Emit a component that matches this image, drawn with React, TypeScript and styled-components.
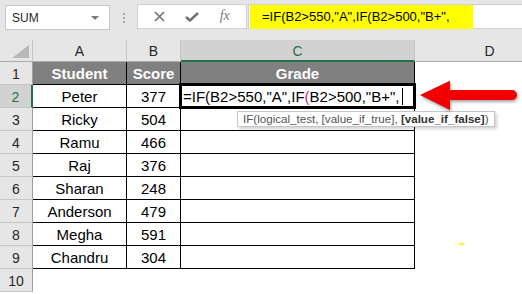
import React from 'react';
import styled, { createGlobalStyle } from 'styled-components';

const Global = createGlobalStyle`
  html, body { margin: 0; padding: 0; background: #fff; }
  body { font-family: "Liberation Sans", Arial, sans-serif; }
`;

const Window = styled.div`
  width: 522px;
  height: 294px;
  overflow: hidden;
  background: #fff;
  display: flex;
  flex-direction: column;
`;

const Toolbar = styled.div`
  height: 40px;
  flex: none;
  background: #e6e6e6;
  display: flex;
  align-items: flex-start;
  padding: 4px 0 0 5px;
  box-sizing: border-box;
`;

const NameBox = styled.div`
  margin-top: 1px;
  width: 105px;
  height: 25px;
  box-sizing: border-box;
  background: #fff;
  border: 1px solid #c6c6c6;
  display: flex;
  align-items: center;
  padding-left: 6px;
  font-size: 12px;
  color: #262626;
`;

const Caret = styled.span`
  margin-left: auto;
  margin-right: 10px;
  width: 0;
  height: 0;
  border-left: 4px solid transparent;
  border-right: 4px solid transparent;
  border-top: 4px solid #7a7a7a;
`;

const Grip = styled.div`
  width: 27px;
  height: 25px;
  display: flex;
  flex-direction: column;
  align-items: center;
  justify-content: center;
  gap: 2px;
  padding-top: 3px;
  box-sizing: border-box;
`;

const GripDot = styled.span`
  width: 2px;
  height: 2px;
  background: #a6a6a6;
`;

const FxButtons = styled.div`
  width: 110px;
  height: 25px;
  box-sizing: border-box;
  background: #fff;
  border: 1px solid #d0d0d0;
  display: flex;
  align-items: center;
  justify-content: space-around;
  padding: 0 6px 0 6px;
`;

const FxLabel = styled.span`
  font-family: "Liberation Serif", "Times New Roman", serif;
  font-style: italic;
  font-size: 14px;
  color: #7a7a7a;
  margin-top: -2px;
`;

const FormulaInput = styled.div`
  margin-left: 1px;
  flex: 1;
  height: 25px;
  box-sizing: border-box;
  background: #fff;
  border: 1px solid #d0d0d0;
  border-right: none;
  padding: 0 0 0 1px;
  display: flex;
`;

const Highlight = styled.div`
  width: 223px;
  height: 24px;
  background: #ffff00;
  font-size: 13px;
  line-height: 24px;
  padding-left: 12px;
  box-sizing: border-box;
  color: #000;
  white-space: nowrap;
`;

const Sheet = styled.div`
  position: relative;
  display: grid;
  grid-template-columns: 33px 94px 54px 234px 150px;
  grid-template-rows: 22px;
  grid-auto-rows: 23px;
`;

const CornerCell = styled.div`
  background: #e6e6e6;
  border-right: 1px solid #c6c6c6;
  border-bottom: 1px solid #ababab;
  display: flex;
  align-items: flex-end;
  justify-content: flex-end;
  padding: 0 3px 3px 0;
`;

const CornerTriangle = styled.span`
  width: 0;
  height: 0;
  border-left: 17px solid transparent;
  border-bottom: 13px solid #b8b8b8;
`;

const ColHeader = styled.div<{ $selected?: boolean }>`
  background: ${(p) => (p.$selected ? '#d2d2d2' : '#e6e6e6')};
  border-right: 1px solid #c6c6c6;
  border-bottom: ${(p) => (p.$selected ? '2px solid #217346' : '1px solid #ababab')};
  color: ${(p) => (p.$selected ? '#217346' : '#262626')};
  font-size: 14px;
  display: flex;
  align-items: center;
  justify-content: center;
  padding-top: 1px;
  box-sizing: border-box;
`;

const RowHeader = styled.div<{ $selected?: boolean }>`
  background: ${(p) => (p.$selected ? '#d2d2d2' : '#e6e6e6')};
  border-right: ${(p) => (p.$selected ? '2px solid #217346' : '1px solid #9e9e9e')};
  border-bottom: 1px solid #c6c6c6;
  color: ${(p) => (p.$selected ? '#217346' : '#262626')};
  font-size: 14px;
  display: flex;
  align-items: center;
  justify-content: center;
  padding-top: 1px;
  box-sizing: border-box;
`;

type Variant = 'title' | 'data' | 'blank';

const Cell = styled.div<{ $variant: Variant }>`
  box-sizing: border-box;
  display: flex;
  align-items: center;
  justify-content: center;
  font-size: 15px;
  padding-top: 1px;
  white-space: nowrap;
  background: ${(p) => (p.$variant === 'title' ? '#808080' : '#fff')};
  color: ${(p) => (p.$variant === 'title' ? '#fff' : '#000')};
  font-weight: ${(p) => (p.$variant === 'title' ? 700 : 400)};
  border-right: ${(p) => (p.$variant === 'blank' ? 'none' : '1px solid #000')};
  border-bottom: ${(p) => (p.$variant === 'blank' ? 'none' : '1px solid #000')};
`;

const ActiveCell = styled(Cell)`
  position: relative;
  z-index: 2;
  justify-content: flex-start;
  padding-left: 2px;
  overflow: visible;

  &::after {
    content: '';
    position: absolute;
    inset: -2px -2px -2px -2px;
    border: 3px solid #000;
    pointer-events: none;
  }
`;

const Paren = styled.span`
  color: #cc2e8a;
`;

const Caret2 = styled.span`
  display: inline-block;
  width: 1px;
  height: 17px;
  background: #000;
  margin-left: 3px;
`;

const Tooltip = styled.div`
  position: absolute;
  left: 56px;
  top: 26px;
  height: 16px;
  box-sizing: border-box;
  padding: 0 5px;
  background: #fff;
  border: 1px solid #c6c6c6;
  box-shadow: 2px 2px 3px rgba(0, 0, 0, 0.18);
  font-size: 11.6px;
  line-height: 14px;
  color: #555;
  white-space: nowrap;
  font-weight: 400;
  z-index: 3;
`;

const Bold = styled.b`
  color: #333;
`;

const Arrow = styled.svg`
  position: absolute;
  left: 418px;
  top: 38px;
  filter: drop-shadow(1px 2px 1.5px rgba(0, 0, 0, 0.35));
  z-index: 4;
`;

const YellowMark = styled.span`
  position: absolute;
  left: 459px;
  top: 203px;
  width: 5px;
  height: 2px;
  background: #ffff00;
`;

const rows: [string, string][] = [
  ['Peter', '377'],
  ['Ricky', '504'],
  ['Ramu', '466'],
  ['Raj', '376'],
  ['Sharan', '248'],
  ['Anderson', '479'],
  ['Megha', '591'],
  ['Chandru', '304'],
];

const XIcon = () => (
  <svg width="11" height="11" viewBox="0 0 11 11">
    <path d="M1 1 L10 10 M10 1 L1 10" stroke="#707070" strokeWidth="1.6" fill="none" />
  </svg>
);

const CheckIcon = () => (
  <svg width="14" height="10" viewBox="0 0 14 10">
    <path d="M1 5 L5 8.5 L13 1" stroke="#707070" strokeWidth="2.4" fill="none" />
  </svg>
);

export default function App() {
  return (
    <Window>
      <Global />
      <Toolbar>
        <NameBox>
          SUM
          <Caret />
        </NameBox>
        <Grip>
          <GripDot />
          <GripDot />
          <GripDot />
        </Grip>
        <FxButtons>
          <XIcon />
          <CheckIcon />
          <FxLabel>fx</FxLabel>
        </FxButtons>
        <FormulaInput>
          <Highlight>=IF(B2&gt;550,"A",IF(B2&gt;500,"B+",</Highlight>
        </FormulaInput>
      </Toolbar>
      <Sheet>
        <CornerCell>
          <CornerTriangle />
        </CornerCell>
        <ColHeader>A</ColHeader>
        <ColHeader>B</ColHeader>
        <ColHeader $selected>C</ColHeader>
        <ColHeader>D</ColHeader>

        <RowHeader>1</RowHeader>
        <Cell $variant="title">Student</Cell>
        <Cell $variant="title">Score</Cell>
        <Cell $variant="title">Grade</Cell>
        <Cell $variant="blank" />

        {rows.map(([name, score], i) => (
          <React.Fragment key={name}>
            <RowHeader $selected={i === 0}>{i + 2}</RowHeader>
            <Cell $variant="data">{name}</Cell>
            <Cell $variant="data">{score}</Cell>
            {i === 0 ? (
              <ActiveCell $variant="data">
                =IF(B2&gt;550,"A",IF<Paren>(</Paren>B2&gt;500,"B+",
                <Caret2 />
                <Tooltip>
                  IF(logical_test, [value_if_true], <Bold>[value_if_false]</Bold>)
                </Tooltip>
              </ActiveCell>
            ) : (
              <Cell $variant="data" />
            )}
            <Cell $variant="blank" />
          </React.Fragment>
        ))}

        <RowHeader>10</RowHeader>
        <Cell $variant="blank" />
        <Cell $variant="blank" />
        <Cell $variant="blank" />
        <Cell $variant="blank" />

        <Arrow width="102" height="36" viewBox="0 0 102 36">
          <path
            d="M2 17 L32 2.7 L32 12 L94 12 A5 5 0 0 1 94 22 L32 22 L32 32 Z"
            fill="#f00000"
          />
        </Arrow>
        <YellowMark />
      </Sheet>
    </Window>
  );
}
